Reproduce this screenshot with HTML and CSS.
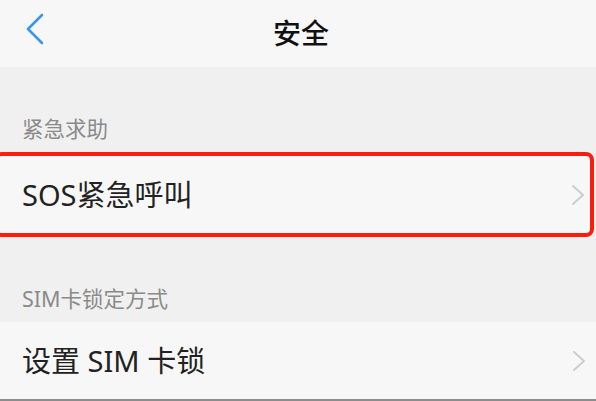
FILE: index.html
```html
<!DOCTYPE html>
<html lang="zh-CN">
<head>
    <meta charset="UTF-8">
    <meta name="viewport" content="width=device-width, initial-scale=1.0">
    <title>安全</title>
    <link rel="stylesheet" href="styles.css">
</head>
<body>

    <!-- Kopbalk -->
    <div class="topbar">
        <a href="javascript:void(0);" class="back-button">
            <svg width="20" height="32" viewBox="0 0 20 32">
                <path d="M17 2 L3 16 L17 30" fill="none" stroke="#3b96ea" stroke-width="2.6" stroke-linecap="round" stroke-linejoin="round"/>
            </svg>
        </a>
        <div class="title">安全</div>
    </div>

    <div class="section-title">紧急求助</div>
    <a href="javascript:void(0);" class="row highlight">
        <span class="row-text">SOS紧急呼叫</span>
        <svg class="arrow" width="14" height="22" viewBox="0 0 14 22">
            <path d="M2 2 L12 11 L2 20" fill="none" stroke="#cdcdcd" stroke-width="2" stroke-linecap="round" stroke-linejoin="round"/>
        </svg>
    </a>

    <div class="section-title">SIM卡锁定方式</div>
    <a href="javascript:void(0);" class="row last">
        <span class="row-text">设置 SIM 卡锁</span>
        <svg class="arrow" width="14" height="22" viewBox="0 0 14 22">
            <path d="M2 2 L12 11 L2 20" fill="none" stroke="#cdcdcd" stroke-width="2" stroke-linecap="round" stroke-linejoin="round"/>
        </svg>
    </a>

</body>
</html>
```

FILE: styles.css
```css
body {
    margin: 0;
    background-color: #f0f0f0;
    font-family: "Noto Sans", "Noto Sans CJK SC", sans-serif;
    overflow: hidden;
}

/* Kopbalk met terugknop */
.topbar {
    position: relative;
    height: 67px;
    background-color: #f7f7f7;
    display: flex;
    align-items: center;
    justify-content: center;
}

.back-button {
    position: absolute;
    left: 25px;
    top: 13px;
    display: block;
    line-height: 0;
}

.title {
    font-size: 28px;
    font-weight: 500;
    color: #111111;
    line-height: 32px;
    margin-top: -2px;
    margin-left: 6px;
}

/* Sectietitels */
.section-title {
    padding: 50px 22px 11px;
    font-size: 21.5px;
    line-height: 24px;
    color: #8a8a8a;
}

/* Rijen */
.row {
    display: flex;
    align-items: center;
    justify-content: space-between;
    height: 77px;
    padding: 0 10px 0 22px;
    background-color: #f7f7f7;
    text-decoration: none;
    box-sizing: border-box;
}

.row-text {
    font-size: 29px;
    color: #222222;
    line-height: 34px;
}

.arrow {
    display: block;
}

/* Rode markering rond de SOS-rij */
.row.highlight {
    height: 85px;
    margin: 0 2px 0 -6px;
    padding-left: 24px;
    padding-right: 5px;
    border: 4px solid #ff1c0d;
    border-radius: 8px;
}

.row.last {
    height: 79px;
    border-bottom: 2px solid #8c8c8c;
}
```
